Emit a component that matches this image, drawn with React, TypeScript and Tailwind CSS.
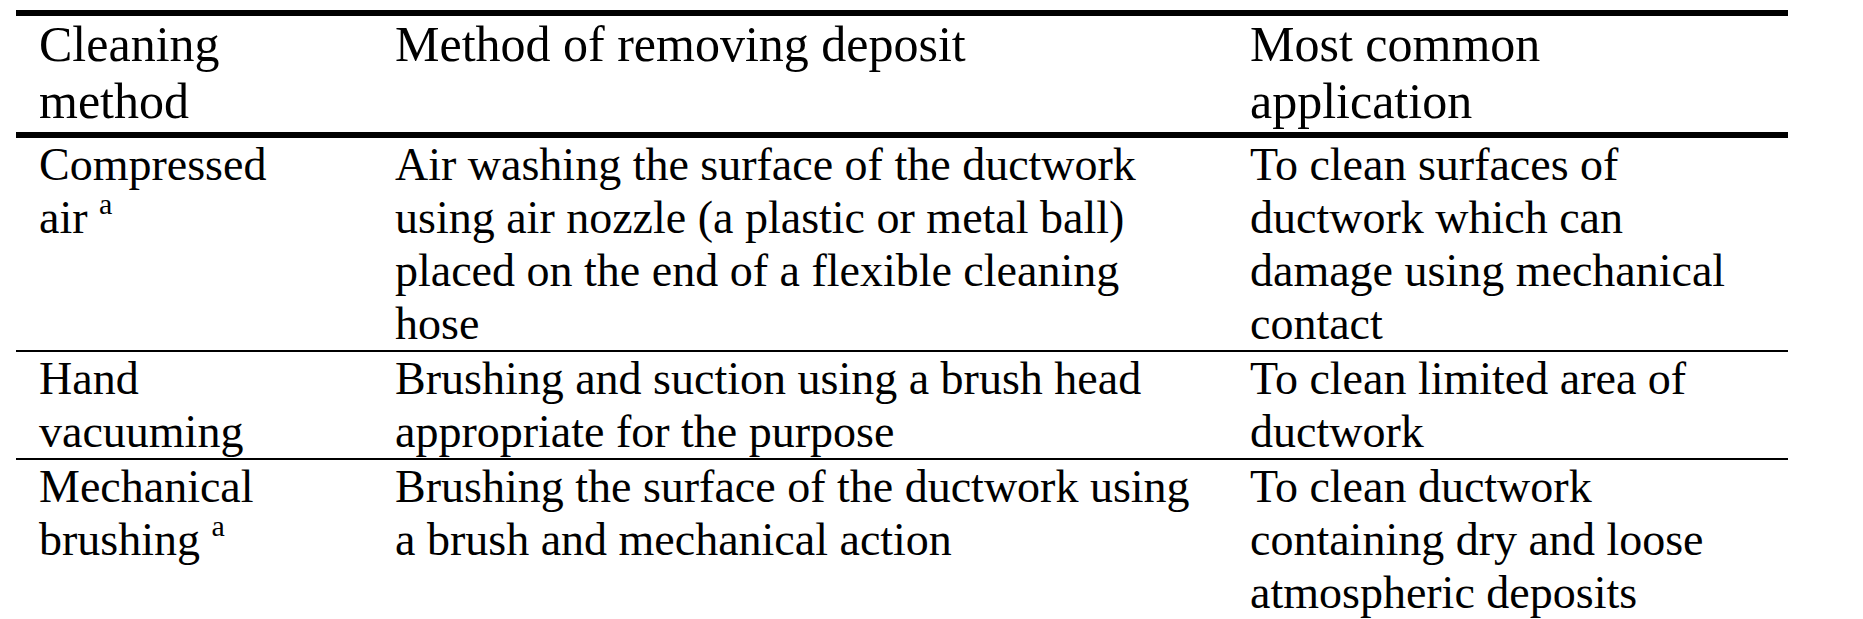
const serif = { fontFamily: '"Liberation Serif", "Times New Roman", serif' }

type Row = {
  method: string[]
  note?: boolean
  removal: string[]
  application: string[]
}

const rows: Row[] = [
  {
    method: ["Compressed", "air"],
    note: true,
    removal: [
      "Air washing the surface of the ductwork",
      "using air nozzle (a plastic or metal ball)",
      "placed on the end of a flexible cleaning",
      "hose",
    ],
    application: [
      "To clean surfaces of",
      "ductwork which can",
      "damage using mechanical",
      "contact",
    ],
  },
  {
    method: ["Hand", "vacuuming"],
    removal: ["Brushing and suction using a brush head", "appropriate for the purpose"],
    application: ["To clean limited area of", "ductwork"],
  },
  {
    method: ["Mechanical", "brushing"],
    note: true,
    removal: ["Brushing the surface of the ductwork using", "a brush and mechanical action"],
    application: ["To clean ductwork", "containing dry and loose", "atmospheric deposits"],
  },
]

function Lines({ lines, note }: { lines: string[]; note?: boolean }) {
  return (
    <div>
      {lines.map((line, i) => (
        <div key={i} className="whitespace-nowrap">
          {line}
          {note && i === lines.length - 1 && (
            <>
              {" "}
              <span className="relative -top-[19px] text-[30px] leading-none">a</span>
            </>
          )}
        </div>
      ))}
    </div>
  )
}

export default function App() {
  return (
    <div className="w-[1863px] h-[619px] overflow-hidden bg-white text-black" style={serif}>
      <div className="ml-[16px] mt-[10px] w-[1772px] border-t-[6px] border-black">
        {/* header */}
        <div className="grid grid-cols-[379px_855px_538px] border-b-[6px] border-black pb-[2px] text-[50px] leading-[57px]">
          <div className="pl-[23px]">
            <Lines lines={["Cleaning", "method"]} />
          </div>
          <div>
            <Lines lines={["Method of removing deposit"]} />
          </div>
          <div>
            <Lines lines={["Most common", "application"]} />
          </div>
        </div>

        {rows.map((row, i) => (
          <div
            key={i}
            className={
              i < rows.length - 1
                ? "grid grid-cols-[379px_855px_538px] border-b-2 border-black text-[46px] leading-[53px]"
                : "grid grid-cols-[379px_855px_538px] text-[46px] leading-[53px]"
            }
          >
            <div className="pl-[23px]">
              <Lines lines={row.method} note={row.note} />
            </div>
            <div>
              <Lines lines={row.removal} />
            </div>
            <div>
              <Lines lines={row.application} />
            </div>
          </div>
        ))}
      </div>
    </div>
  )
}
